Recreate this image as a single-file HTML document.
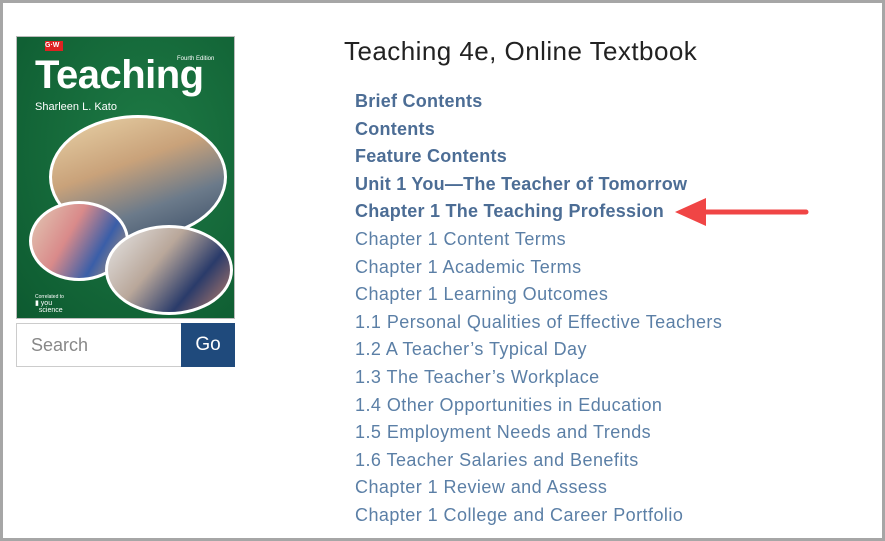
<!DOCTYPE html>
<html><head><style>
html,body{margin:0;padding:0}
body{width:885px;height:541px;position:relative;background:#fff;font-family:"Liberation Sans",sans-serif;overflow:hidden}
.frame{position:absolute;left:0;top:0;width:885px;height:541px;border:3px solid #a6a6a6;box-sizing:border-box}
.cover{position:absolute;left:16px;top:36px;width:217px;height:281px;border:1px solid #bbb;background:radial-gradient(ellipse at 60% 40%,#1e7a45,#0d5a30);overflow:hidden}
.ov{position:absolute;border-radius:50%;border:3px solid #fff;}
.search{position:absolute;left:16px;top:323px;height:42px;border:1px solid #ccc;color:#888;font-size:18px;line-height:42px;padding-left:14px;box-sizing:content-box;width:150px}
.go{position:absolute;left:181px;top:323px;width:54px;height:44px;background:#1f4a7c;color:#fff;font-size:19px;line-height:44px;text-align:center}
h1{position:absolute;left:344px;top:36px;margin:0;font-weight:normal;font-size:26px;color:#222;letter-spacing:0.45px}
ul{position:absolute;left:355px;top:88px;margin:0;padding:0;list-style:none}
li{font-size:18px;line-height:27.6px;color:#5b7fa6;white-space:nowrap;letter-spacing:0.45px}
li.b{font-weight:bold;color:#4c6d95;letter-spacing:0.25px}
</style></head><body>
<div class="frame"></div>
<div class="cover">
 <div style="position:absolute;left:28px;top:4px;width:18px;height:10px;background:#d22;color:#fff;font-size:7px;font-weight:bold;line-height:10px">G·W</div>
 <div style="position:absolute;left:160px;top:19px;color:#fff;font-size:6px">Fourth Edition</div>
 <div style="position:absolute;left:18px;top:16px;color:#fff;font-size:40px;font-weight:bold;letter-spacing:-0.5px">Teaching</div>
 <div style="position:absolute;left:18px;top:64px;color:#fff;font-size:11px">Sharleen L. Kato</div>
 <div class="ov" style="left:32px;top:78px;width:172px;height:118px;background:linear-gradient(160deg,#e9d3a8 0%,#c9a27a 40%,#6b7a8a 70%,#3b4d66 100%)"></div>
 <div class="ov" style="left:12px;top:164px;width:94px;height:74px;background:linear-gradient(120deg,#e2c9b5,#d98a8a 40%,#3a5ea8 70%,#c8a070)"></div>
 <div class="ov" style="left:88px;top:188px;width:122px;height:84px;background:linear-gradient(130deg,#e6e6e6,#b9a79a 40%,#2a3b6a 70%,#c3826a)"></div>
 <div style="position:absolute;left:18px;top:257px;color:#fff;font-size:5px">Correlated to</div>
 <div style="position:absolute;left:18px;top:263px;color:#fff;font-size:7px;line-height:7px">▮ you<br>&nbsp;&nbsp;science</div>
</div>
<div class="search">Search</div>
<div class="go">Go</div>
<h1>Teaching 4e, Online Textbook</h1>
<ul>
<li class="b">Brief Contents</li>
<li class="b">Contents</li>
<li class="b">Feature Contents</li>
<li class="b">Unit 1 You—The Teacher of Tomorrow</li>
<li class="b">Chapter 1 The Teaching Profession</li>
<li>Chapter 1 Content Terms</li>
<li>Chapter 1 Academic Terms</li>
<li>Chapter 1 Learning Outcomes</li>
<li>1.1 Personal Qualities of Effective Teachers</li>
<li>1.2 A Teacher’s Typical Day</li>
<li>1.3 The Teacher’s Workplace</li>
<li>1.4 Other Opportunities in Education</li>
<li>1.5 Employment Needs and Trends</li>
<li>1.6 Teacher Salaries and Benefits</li>
<li>Chapter 1 Review and Assess</li>
<li>Chapter 1 College and Career Portfolio</li>
</ul>
<svg style="position:absolute;left:670px;top:195px" width="145" height="35">
 <line x1="30" y1="17" x2="136" y2="17" stroke="#f04545" stroke-width="5" stroke-linecap="round"/>
 <polygon points="5,17 36,3 36,31" fill="#f04545"/>
</svg>
</body></html>
